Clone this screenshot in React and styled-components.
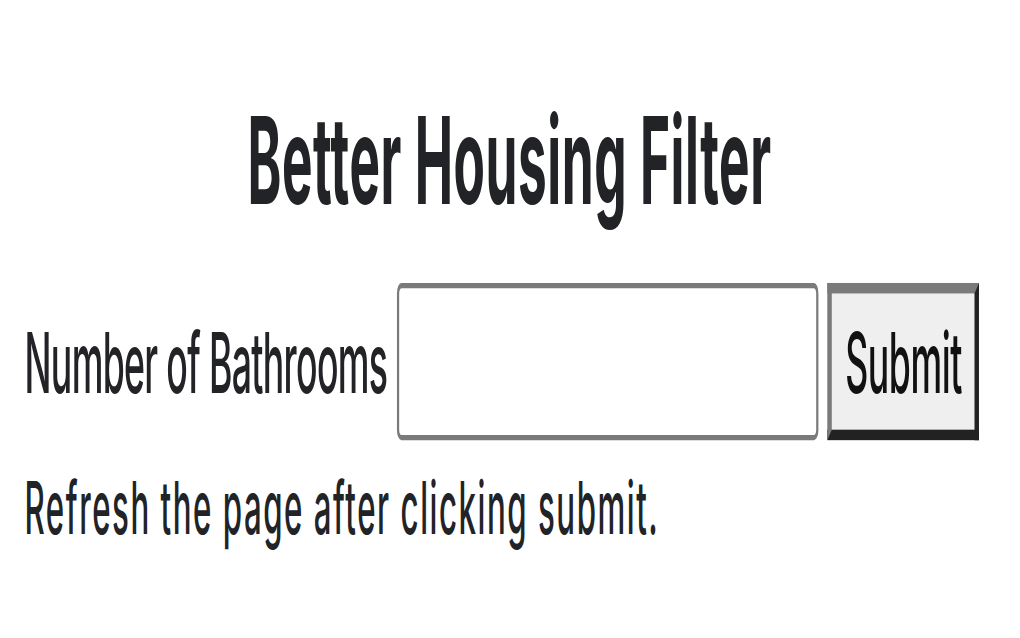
import styled, { createGlobalStyle } from "styled-components";

const GlobalStyle = createGlobalStyle`
  html, body {
    margin: 0;
    padding: 0;
    background: #fff;
  }
`;

const Window = styled.div`
  width: 1020px;
  height: 638px;
  overflow: hidden;
  background: #fff;
`;

// the popup is laid out at its own small size, then blown up to fill the window
const Stage = styled.div`
  display: flow-root;
  width: 457px;
  height: 122px;
  transform: scale(2.23, 5.24);
  transform-origin: 0 0;
  box-sizing: border-box;
  padding: 0 11px;
  font-family: Inter, "Liberation Sans", sans-serif;
  font-weight: 500;
  color: #222326;
`;

const Title = styled.h1`
  margin: 17px 0 0;
  font-size: 23px;
  line-height: 28px;
  font-weight: 700;
  text-align: center;
  letter-spacing: 0.25px;
`;

const Row = styled.form`
  display: flex;
  align-items: center;
  gap: 4.5px;
  margin-top: 9px;
  height: 30px;
`;

const Label = styled.label`
  font-size: 16px;
  letter-spacing: -0.3px;
  white-space: nowrap;
`;

const Input = styled.input`
  box-sizing: border-box;
  width: 188.5px;
  height: 30px;
  border: 1px solid #7a7a7a;
  border-radius: 2px;
  background: #fff;
  padding: 0 4px;
  font: inherit;
`;

const Button = styled.button`
  box-sizing: border-box;
  width: 68px;
  height: 30.5px;
  padding: 0;
  border-style: solid;
  border-width: 2px;
  border-color: #7a7a7a #222 #222 #7a7a7a;
  background: #efefef;
  font-family: inherit;
  font-weight: 500;
  font-size: 16px;
  letter-spacing: -0.2px;
  color: #111;
`;

const Note = styled.p`
  margin: 4px 0 0;
  font-size: 14px;
  line-height: 17px;
  letter-spacing: 0.69px;
`;

export default function App() {
  return (
    <>
      <GlobalStyle />
      <Window>
        <Stage>
          <Title>Better Housing Filter</Title>
          <Row onSubmit={(e) => e.preventDefault()}>
            <Label htmlFor="baths">Number of Bathrooms</Label>
            <Input id="baths" type="text" />
            <Button type="submit">Submit</Button>
          </Row>
          <Note>Refresh the page after clicking submit.</Note>
        </Stage>
      </Window>
    </>
  );
}
